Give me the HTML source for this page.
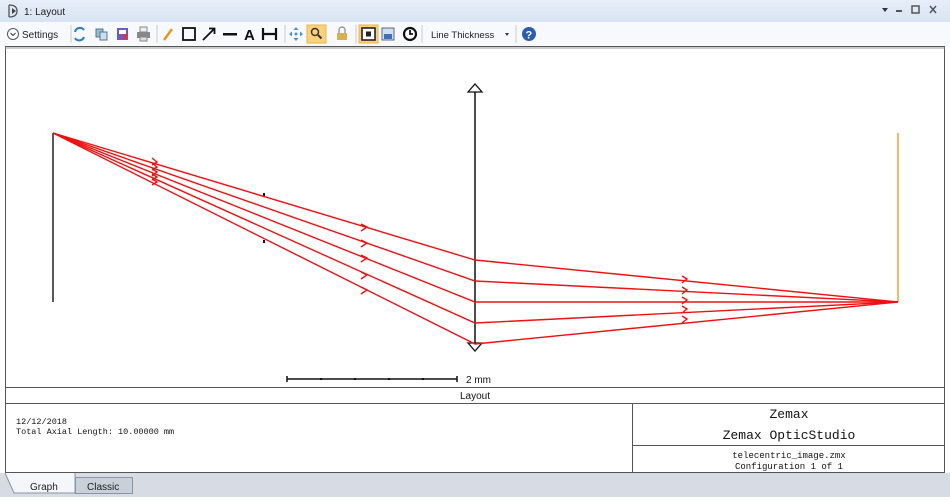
<!DOCTYPE html>
<html><head><style>
body{margin:0;width:950px;height:497px;overflow:hidden;background:#fff;font-family:"Liberation Sans",sans-serif}
</style></head><body>
<svg width="950" height="497" viewBox="0 0 950 497" xmlns="http://www.w3.org/2000/svg" font-family="Liberation Sans, sans-serif">
<defs><linearGradient id="tb" x1="0" y1="0" x2="0" y2="1"><stop offset="0" stop-color="#e6eef8"/><stop offset="1" stop-color="#d8e4f2"/></linearGradient></defs>
<rect x="0" y="0" width="950" height="22" fill="url(#tb)"/>
<rect x="0" y="22" width="950" height="24" fill="#f7f9fc"/>
<path d="M9 5v12M9 5q8 0 8 6t-8 6" fill="none" stroke="#555" stroke-width="1.3"/>
<path d="M12 8l4 3-4 3z" fill="#444"/>
<text x="24" y="15" font-size="10" fill="#222">1: Layout</text>
<path d="M882 8h6l-3 4z" fill="#333"/>
<rect x="896" y="10" width="6" height="2" fill="#555"/>
<rect x="912" y="6" width="7" height="7" fill="none" stroke="#555" stroke-width="1.5"/>
<path d="M930 6l6 7M936 6l-6 7" stroke="#555" stroke-width="1.5"/>
<circle cx="13" cy="34" r="5.5" fill="#fff" stroke="#555"/>
<path d="M10.5 33l2.5 2.5 2.5-2.5" fill="none" stroke="#333"/>
<text x="22" y="38" font-size="10" fill="#222">Settings</text>
<line x1="71" y1="25" x2="71" y2="43" stroke="#ccc"/>
<path d="M75 32a5 5 0 0 1 9-2M84 37a5 5 0 0 1-9 1" fill="none" stroke="#2a7bd4" stroke-width="2"/>
<rect x="96" y="29" width="7" height="8" fill="#9bc" stroke="#579"/><rect x="100" y="32" width="7" height="8" fill="#cde" stroke="#579"/>
<rect x="117" y="28" width="11" height="12" fill="#6a5acd"/><rect x="119" y="30" width="7" height="4" fill="#fff"/><rect x="123" y="34" width="4" height="5" fill="#d33"/>
<rect x="137" y="32" width="13" height="6" fill="#888"/><rect x="140" y="27" width="7" height="5" fill="#eee" stroke="#888"/><rect x="140" y="37" width="7" height="4" fill="#ddd" stroke="#888"/>
<line x1="157" y1="25" x2="157" y2="43" stroke="#ccc"/>
<path d="M164 40l8-11" stroke="#e8961e" stroke-width="2.5"/>
<rect x="183" y="28" width="12" height="12" fill="none" stroke="#111" stroke-width="1.8"/>
<path d="M203 40l11-11M209 28.5h5.5v5.5" fill="none" stroke="#111" stroke-width="1.8"/>
<rect x="223" y="33" width="14" height="2.5" fill="#111"/>
<text x="244" y="40" font-size="15" font-weight="bold" fill="#111">A</text>
<path d="M263 28v12M276 28v12M263 34h13" stroke="#111" stroke-width="2.2"/>
<line x1="285" y1="25" x2="285" y2="43" stroke="#ccc"/>
<path d="M296 27l2.5 3h-5zM296 41l2.5-3h-5zM289 34l3-2.5v5zM303 34l-3-2.5v5z" fill="#4a8fd8"/><circle cx="296" cy="34" r="1.5" fill="#4a8fd8"/>
<rect x="307" y="25" width="19" height="18" fill="#fbd27a" stroke="#e8b54a"/>
<circle cx="315" cy="32" r="3.5" fill="none" stroke="#333" stroke-width="1.5"/><path d="M318 35l3.5 3.5" stroke="#333" stroke-width="2"/>
<path d="M339 33v-3a3 3 0 0 1 6 0v3" fill="none" stroke="#999" stroke-width="1.4"/><rect x="337" y="33" width="10" height="7" fill="#d9b04a"/>
<line x1="356" y1="25" x2="356" y2="43" stroke="#ccc"/>
<rect x="359" y="25" width="19" height="18" fill="#fbd27a" stroke="#e8b54a"/>
<rect x="362" y="28" width="13" height="12" fill="#fff" stroke="#222" stroke-width="1.6"/><rect x="366" y="31.5" width="5" height="5" fill="#222"/>
<rect x="382" y="28" width="12" height="12" fill="#cfe0f2" stroke="#668"/><rect x="384" y="34" width="8" height="5" fill="#3a6fc4"/>
<circle cx="410" cy="34" r="6" fill="#fff" stroke="#111" stroke-width="2.2"/><path d="M410 30v4h3" stroke="#111" stroke-width="1.8" fill="none"/>
<line x1="422" y1="25" x2="422" y2="43" stroke="#ccc"/>
<text x="431" y="38" font-size="9.5" fill="#222">Line Thickness</text>
<path d="M505 33h4l-2 3z" fill="#333"/>
<line x1="516" y1="25" x2="516" y2="43" stroke="#ccc"/>
<circle cx="529" cy="34" r="7" fill="#2a5db0"/><text x="525.5" y="38.5" font-size="11" font-weight="bold" fill="#fff">?</text>
<rect x="5.5" y="46.5" width="939" height="426" fill="#fff" stroke="#555"/>
<line x1="5" y1="387.5" x2="945" y2="387.5" stroke="#555"/>
<line x1="5" y1="403.5" x2="945" y2="403.5" stroke="#555"/>
<line x1="632.5" y1="404" x2="632.5" y2="472" stroke="#555"/>
<line x1="632" y1="445.5" x2="945" y2="445.5" stroke="#555"/>
<line x1="5" y1="48" x2="945" y2="48" stroke="#999"/>
<line x1="53" y1="133" x2="53" y2="302" stroke="#222" stroke-width="1.5"/>
<line x1="898" y1="133" x2="898" y2="302" stroke="#f0a030" stroke-width="1.5"/>
<line x1="475" y1="88" x2="475" y2="347" stroke="#111" stroke-width="1.5"/>
<path d="M468 92l7-8 7 8z" fill="#fff" stroke="#111" stroke-width="1.3"/>
<path d="M468 343l7 8 7-8z" fill="#fff" stroke="#111" stroke-width="1.3"/>
<path d="M264 193v3M264 240v3" stroke="#111" stroke-width="2"/>
<g stroke="#f01010" stroke-width="1.4" fill="none">
<path d="M53 133L475 260L898 302"/>
<path d="M53 133L475 281L898 302"/>
<path d="M53 133L475 302L898 302"/>
<path d="M53 133L475 323L898 302"/>
<path d="M53 133L475 344L898 302"/>
<path d="M152 158l5 4-5 3M152 163l5 4-5 3M152 169l5 3-5 4M152 174l5 3-5 3M152 179l5 3-5 3"/>
<path d="M361 224l6 3-6 4M361 240l6 3-6 4M361 255l6 3-6 4M361 272l6 3-6 4M361 287l6 3-6 4"/>
<path d="M682 276l5 3-5 4M682 287l5 3-5 4M682 297l5 3-5 4M682 306l5 3-5 4M682 316l5 3-5 4"/>
</g>
<path d="M287 379h170M287 376v6M457 376v6" stroke="#111" stroke-width="1.5"/>
<path d="M321 378v2M355 378v2M389 378v2M423 378v2" stroke="#111" stroke-width="2"/>
<text x="466" y="383" font-size="10" fill="#111">2 mm</text>
<text x="475" y="399" font-size="10" fill="#111" text-anchor="middle">Layout</text>
<g font-family="Liberation Mono, monospace" fill="#111">
<text x="16" y="424" font-size="8.5">12/12/2018</text>
<text x="16" y="434" font-size="8.5">Total Axial Length:   10.00000 mm</text>
<text x="789" y="418" font-size="13" text-anchor="middle">Zemax</text>
<text x="789" y="439" font-size="13" text-anchor="middle">Zemax OpticStudio</text>
<text x="789" y="458" font-size="9" text-anchor="middle">telecentric_image.zmx</text>
<text x="789" y="469" font-size="9" text-anchor="middle">Configuration 1 of 1</text>
</g>
<rect x="0" y="473" width="950" height="24" fill="#d7dce4"/>
<path d="M5 473L14 493H75V473" fill="#f4f6f9" stroke="#8a94a4"/>
<rect x="75.5" y="477.5" width="57" height="16" fill="#c9d0da" stroke="#8a94a4"/>
<text x="30" y="490" font-size="10" fill="#222">Graph</text>
<text x="87" y="490" font-size="10" fill="#222">Classic</text>
</svg>
</body></html>
